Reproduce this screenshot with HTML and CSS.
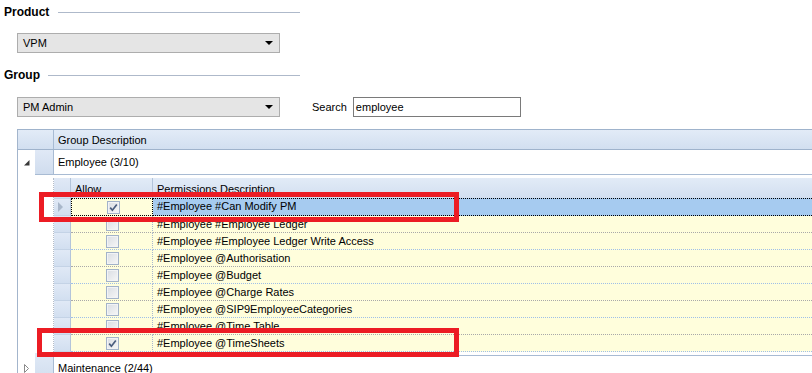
FILE: index.html
```html
<!DOCTYPE html>
<html>
<head>
<meta charset="utf-8">
<title>Permissions</title>
<link rel="stylesheet" href="styles.css">
</head>
<body>
<div class="page">
  <div class="section-title product-title"><span>Product</span></div>
  <div class="combo combo-product"><span>VPM</span><span class="arrow"></span></div>

  <div class="section-title group-title"><span>Group</span></div>
  <div class="group-row">
    <div class="combo"><span>PM Admin</span><span class="arrow"></span></div>
    <span class="search-label">Search</span>
    <div class="search-input">employee</div>
  </div>

  <div class="grid">
    <div class="g-header">
      <div class="g-ind"></div>
      <div class="g-hcell">Group Description</div>
    </div>

    <div class="g-row">
      <div class="g-exp"><svg width="6" height="6" viewBox="0 0 6 6"><polygon points="5.5,0 5.5,5.5 0,5.5" fill="#383838"/></svg></div>
      <div class="g-rowhead"></div>
      <div class="g-cell">Employee (3/10)</div>
    </div>

    <div class="detail-wrap">
      <div class="indent"></div>
      <div class="detail">
        <div class="d-header">
          <div class="d-ind"></div>
          <div class="d-hallow">Allow</div>
          <div class="d-hdesc">Permissions Description</div>
        </div>

        <div class="d-row selected">
          <div class="d-ind"><svg width="6" height="10" viewBox="0 0 6 10"><polygon points="0,0 5,5 0,10" fill="#a9b7ca"/></svg></div>
          <div class="d-allow"><span class="cb checked"><svg width="11" height="11" viewBox="0 0 11 11"><path d="M2.2 5.6 L4.4 8.2 L8.8 2.4" fill="none" stroke="#4a5d7e" stroke-width="1.7"/></svg></span></div>
          <div class="d-desc">#Employee #Can Modify PM</div>
        </div>
        <div class="d-row">
          <div class="d-ind"></div>
          <div class="d-allow"><span class="cb"></span></div>
          <div class="d-desc">#Employee #Employee Ledger</div>
        </div>
        <div class="d-row">
          <div class="d-ind"></div>
          <div class="d-allow"><span class="cb"></span></div>
          <div class="d-desc">#Employee #Employee Ledger Write Access</div>
        </div>
        <div class="d-row">
          <div class="d-ind"></div>
          <div class="d-allow"><span class="cb"></span></div>
          <div class="d-desc">#Employee @Authorisation</div>
        </div>
        <div class="d-row">
          <div class="d-ind"></div>
          <div class="d-allow"><span class="cb"></span></div>
          <div class="d-desc">#Employee @Budget</div>
        </div>
        <div class="d-row">
          <div class="d-ind"></div>
          <div class="d-allow"><span class="cb"></span></div>
          <div class="d-desc">#Employee @Charge Rates</div>
        </div>
        <div class="d-row">
          <div class="d-ind"></div>
          <div class="d-allow"><span class="cb"></span></div>
          <div class="d-desc">#Employee @SIP9EmployeeCategories</div>
        </div>
        <div class="d-row">
          <div class="d-ind"></div>
          <div class="d-allow"><span class="cb"></span></div>
          <div class="d-desc">#Employee @Time Table</div>
        </div>
        <div class="d-row">
          <div class="d-ind"></div>
          <div class="d-allow"><span class="cb checked"><svg width="11" height="11" viewBox="0 0 11 11"><path d="M2.2 5.6 L4.4 8.2 L8.8 2.4" fill="none" stroke="#4a5d7e" stroke-width="1.7"/></svg></span></div>
          <div class="d-desc">#Employee @TimeSheets</div>
        </div>
      </div>
    </div>

    <div class="g-row maint">
      <div class="g-exp"><svg width="6" height="10" viewBox="0 0 6 10"><polygon points="0.5,0.5 4.5,4.5 0.5,8.5" fill="none" stroke="#8a8a8a" stroke-width="1"/></svg></div>
      <div class="g-rowhead"></div>
      <div class="g-cell">Maintenance (2/44)</div>
    </div>
  </div>

  <div class="red-box box1"></div>
  <div class="red-box box2"></div>
</div>
</body>
</html>
```

FILE: styles.css
```css
* { box-sizing: border-box; }

body {
  margin: 0;
  background: #ffffff;
  font-family: "Liberation Sans", Arial, sans-serif;
  font-size: 11px;
  color: #000;
  overflow: hidden;
}

.page {
  position: relative;
  width: 812px;
  height: 373px;
  overflow: hidden;
}

/* section headings with rule */
.section-title {
  display: flex;
  align-items: center;
  width: 300px;
  height: 16px;
  padding-left: 4px;
  font-size: 12px;
  font-weight: bold;
}
.section-title::after {
  content: "";
  flex: 1;
  height: 1px;
  background: #aeb9ca;
  margin-left: 9px;
}
.product-title { margin-top: 4px; }
.group-title { margin-top: 14px; }
.group-title::after { margin-left: 8px; }

/* combo boxes */
.combo {
  display: flex;
  align-items: center;
  justify-content: space-between;
  width: 263px;
  height: 20px;
  margin-left: 17px;
  padding-left: 5px;
  padding-right: 6px;
  border: 1px solid #adadad;
  background: #e5e5e5;
  flex-shrink: 0;
}
.combo-product { margin-top: 13px; }
.arrow {
  width: 0;
  height: 0;
  border-left: 4px solid transparent;
  border-right: 4px solid transparent;
  border-top: 4px solid #000;
}

.group-row {
  display: flex;
  align-items: center;
  height: 20px;
  margin-top: 14px;
}
.search-label { margin-left: 32px; }
.search-input {
  width: 168px;
  height: 20px;
  margin-left: 6px;
  padding-left: 2px;
  border: 1px solid #7a7a7a;
  background: #fff;
  line-height: 18px;
}

/* outer grid */
.grid {
  margin-top: 12px;
  margin-left: 17px;
  border-top: 1px solid #9fb3cc;
  border-left: 1px solid #a3b5cc;
}
.g-header {
  display: flex;
  height: 20px;
  border-bottom: 1px solid #9fb3cc;
  background: linear-gradient(#e2ebf7, #d2dff0);
}
.g-ind {
  width: 36px;
  border-right: 1px solid #a8bbd3;
}
.g-hcell {
  flex: 1;
  padding-left: 4px;
  padding-top: 2px;
  line-height: 17px;
}
.g-row {
  display: flex;
  height: 25px;
}
.g-exp {
  width: 17px;
  display: flex;
  align-items: center;
  justify-content: center;
  padding-left: 1px;
}
.g-rowhead {
  width: 19px;
  background: linear-gradient(#e0e9f6, #d0ddee);
  border-right: 1px solid #a8bbd3;
  border-bottom: 1px solid #a8bbd3;
}
.g-cell {
  flex: 1;
  padding-left: 4px;
  line-height: 24px;
  border-bottom: 1px solid #a8bbd3;
  background: #fff;
}

/* detail grid */
.detail-wrap {
  display: flex;
  padding-top: 3px;
}
.indent { width: 35px; flex-shrink: 0; }
.detail { flex: 1; border-left: 1px dotted #b4bcc8; }

.d-header {
  display: flex;
  height: 20px;
  background: linear-gradient(#e2ebf7, #d2dff0);
}
.d-header .d-ind { border-bottom: none; }
.d-hallow {
  width: 82px;
  padding-left: 4px;
  padding-top: 2px;
  line-height: 18px;
  border-right: 1px solid #b3c4da;
}
.d-hdesc {
  flex: 1;
  padding-left: 4px;
  padding-top: 2px;
  line-height: 18px;
}

.d-row {
  display: flex;
  height: 17px;
}
.d-ind {
  width: 17px;
  display: flex;
  align-items: center;
  padding-left: 4px;
  background: linear-gradient(#e0e9f6, #d2dff0);
  border-right: 1px solid #b3c4da;
  border-bottom: 1px solid #c4d3e6;
}
.d-allow {
  width: 82px;
  display: flex;
  align-items: center;
  justify-content: center;
  background: #fffedc;
  border-right: 1px dotted #a8b8cf;
  border-bottom: 1px dotted #9fbfe8;
}
.d-desc {
  flex: 1;
  padding-left: 4px;
  line-height: 16px;
  white-space: nowrap;
  background: #fffedc;
  border-bottom: 1px dotted #9fbfe8;
}
.d-row:nth-child(odd) .d-allow,
.d-row:nth-child(odd) .d-desc {
  border-bottom-color: #a9a9a9;
}

.d-row.selected { height: 18px; }
.selected .d-ind { border-top: 1px solid #c4d3e6; }
.selected .d-allow {
  border: 1px dotted #000;
}
.selected .d-desc {
  background: #a6cbf0;
  border-top: 1px dotted #000;
  border-bottom: 1px dotted #000;
  line-height: 15px;
}

.cb {
  width: 13px;
  height: 13px;
  display: flex;
  align-items: center;
  justify-content: center;
  border: 1px solid #a3b3c9;
  background: linear-gradient(135deg, #d9dde3, #f7f7f7);
  box-shadow: inset 0 0 0 1px #f2f3f5;
  margin-left: 2px;
}

/* maintenance row */
.g-row.maint {
  height: 30px;
  margin-top: 1px;
}
.maint .g-exp {
  align-items: flex-start;
  padding-top: 11px;
}
.maint .g-rowhead { border-bottom: none; }
.maint .g-cell {
  margin-top: 2px;
  border-top: 1px solid #a8bbd3;
  border-bottom: none;
}

/* annotation boxes */
.red-box {
  position: absolute;
  border: 5px solid #ec1c24;
}
.box1 {
  left: 39px;
  top: 192px;
  width: 420px;
  height: 30px;
}
.box2 {
  left: 37px;
  top: 328px;
  width: 422px;
  height: 29px;
}
```
